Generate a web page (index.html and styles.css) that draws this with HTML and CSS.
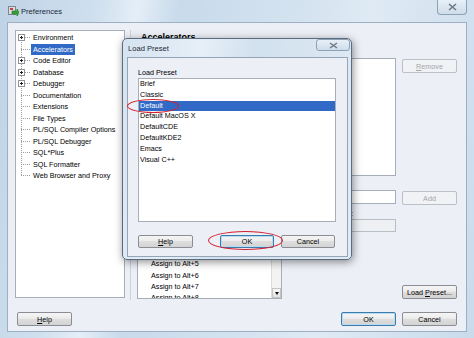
FILE: index.html
```html
<!DOCTYPE html>
<html lang="en">
<head>
    <meta charset="UTF-8">
    <title>Preferences</title>
    <link rel="stylesheet" href="styles.css">
</head>
<body>
    <div class="window">
        <div class="titlebar">
            <svg class="app-icon" width="11" height="12" viewBox="0 0 11 12">
                <rect x="0.5" y="1.5" width="7" height="8" fill="#d9dde2" stroke="#7d8792"/>
                <rect x="2" y="3" width="3" height="2" fill="#c9413f"/>
                <path d="M4 6 L9 6 L9 4 L11 7.5 L9 11 L9 9 L4 9 Z" fill="#3aa43a" stroke="#1f6e22" stroke-width="0.6"/>
            </svg>
            <span class="title">Preferences</span>
            <div class="close">
                <svg width="9" height="8" viewBox="0 0 9 8"><path d="M1 1 L8 7 M8 1 L1 7" stroke="#6c7a88" stroke-width="1.6"/></svg>
            </div>
        </div>

        <div class="client">
            <div class="main">
                <div class="tree">
                    <ul class="tree-items">
                        <li><span class="twig"><span class="exp"></span></span><span class="label">Environment</span></li>
                        <li><span class="twig"></span><span class="label selected">Accelerators</span></li>
                        <li><span class="twig"><span class="exp"></span></span><span class="label">Code Editor</span></li>
                        <li><span class="twig"><span class="exp"></span></span><span class="label">Database</span></li>
                        <li><span class="twig"><span class="exp"></span></span><span class="label">Debugger</span></li>
                        <li><span class="twig"></span><span class="label">Documentation</span></li>
                        <li><span class="twig"></span><span class="label">Extensions</span></li>
                        <li><span class="twig"></span><span class="label">File Types</span></li>
                        <li><span class="twig"></span><span class="label">PL/SQL Compiler Options</span></li>
                        <li><span class="twig"></span><span class="label">PL/SQL Debugger</span></li>
                        <li><span class="twig"></span><span class="label">SQL*Plus</span></li>
                        <li><span class="twig"></span><span class="label">SQL Formatter</span></li>
                        <li><span class="twig"></span><span class="label">Web Browser and Proxy</span></li>
                    </ul>
                </div>

                <section class="pane">
                    <h2 class="pane-title">Accelerators</h2>
                    <div class="row row-list">
                        <div class="box list-main"></div>
                        <button class="btn btn-side" disabled><u>R</u>emove</button>
                    </div>
                    <div class="row row-key">
                        <div class="field"></div>
                        <button class="btn btn-side" disabled>Add</button>
                    </div>
                    <div class="assigned">Currently assigned to component:</div>
                    <div class="field field-off"></div>
                    <div class="row row-bottom">
                        <div class="box list-keys">
                            <ul class="key-items">
                                <li>Assign to Alt+5</li>
                                <li>Assign to Alt+6</li>
                                <li>Assign to Alt+7</li>
                                <li>Assign to Alt+8</li>
                            </ul>
                            <div class="scrollbar"><span class="arrow-down"></span></div>
                        </div>
                        <button class="btn btn-preset">Load <u>P</u>reset...</button>
                    </div>
                </section>
            </div>

            <div class="footer">
                <button class="btn"><u>H</u>elp</button>
                <button class="btn btn-default push">OK</button>
                <button class="btn">Cancel</button>
            </div>
        </div>

        <!-- Load Preset dialog on top of the preferences window -->
        <div class="dialog">
            <div class="dialog-bar">
                <span class="title">Load Preset</span>
                <div class="close close-small">
                    <svg width="9" height="7" viewBox="0 0 9 7"><path d="M1 1 L8 6 M8 1 L1 6" stroke="#6c7a88" stroke-width="1.5"/></svg>
                </div>
            </div>
            <div class="dialog-body">
                <div class="dialog-label">Load Preset</div>
                <ul class="box preset-list">
                    <li>Brief</li>
                    <li>Classic</li>
                    <li class="selected">Default</li>
                    <li>Default MacOS X</li>
                    <li>DefaultCDE</li>
                    <li>DefaultKDE2</li>
                    <li>Emacs</li>
                    <li>Visual C++</li>
                </ul>
                <div class="dialog-buttons">
                    <button class="btn"><u>H</u>elp</button>
                    <button class="btn btn-default push">OK</button>
                    <button class="btn">Cancel</button>
                </div>
            </div>
        </div>

        <div class="mark mark-default"></div>
        <div class="mark mark-ok"></div>
    </div>
</body>
</html>
```

FILE: styles.css
```css
* {
    box-sizing: border-box;
}
body {
    margin: 0;
    font-family: "Liberation Sans", Arial, sans-serif;
    font-size: 7.2px;
    color: #000;
    background: #c4d7e8;
}
ul {
    list-style: none;
    margin: 0;
    padding: 0;
}
.window {
    position: relative;
    width: 474px;
    height: 338px;
    overflow: hidden;
    background: linear-gradient(100deg, #bfd3e6 0%, #cfdfee 18%, #e4eef7 26%, #c8daeb 34%, #d3e2ef 55%, #dfeaf4 70%, #c9dbeb 100%);
}
.titlebar {
    height: 22px;
    display: flex;
    align-items: center;
    padding-left: 8px;
}
.app-icon {
    margin-right: 2px;
}
.title {
    font-size: 7.6px;
    color: #1b2838;
}
.close {
    margin-left: auto;
    align-self: flex-start;
    width: 30px;
    height: 15px;
    margin-right: 7px;
    border: 1px solid #8ea2b5;
    border-top: none;
    border-radius: 0 0 4px 4px;
    background: linear-gradient(#e8f0f7, #cfdcea);
    display: flex;
    align-items: center;
    justify-content: center;
}
.client {
    margin-left: 7px;
    width: 460px;
    height: 310px;
    background: #eceff6;
    border: 1px solid #9cb0c3;
    padding: 7px 9px 0 7px;
    display: flex;
    flex-direction: column;
}
.main {
    display: flex;
    gap: 5px;
    height: 270px;
}
.box {
    background: #fff;
    border: 1px solid #a7aeb8;
}

/* tree */
.tree {
    width: 117px;
    height: 268px;
    background: #fff;
    border: 1px solid #a7aeb8;
}
.tree-items {
    padding: 1px 0 0 1px;
    background: repeating-linear-gradient(to bottom, #9d9d9d 0 1px, transparent 1px 2px) no-repeat 5px 7px / 1px 138px;
}
.tree-items li {
    display: flex;
    align-items: center;
    height: 11.5px;
}
.twig {
    width: 14px;
    height: 11px;
    display: flex;
    align-items: center;
    background: repeating-linear-gradient(90deg, #9d9d9d 0 1px, transparent 1px 2px) no-repeat 4px 5px / 10px 1px;
}
.exp {
    width: 7px;
    height: 7px;
    margin-left: 1px;
    border: 1px solid #8f9296;
    background:
        linear-gradient(#222, #222) no-repeat center / 3px 1px,
        linear-gradient(#222, #222) no-repeat center / 1px 3px,
        #fff;
}
.label {
    padding: 0 2px;
    line-height: 11px;
    white-space: nowrap;
}
.selected {
    background: #3169c6;
    color: #fff;
}

/* right pane */
.pane {
    flex: 1;
    border-left: 1px solid #cdd2da;
    padding-left: 6px;
    display: flex;
    flex-direction: column;
}
.pane-title {
    margin: 0 0 0 4px;
    font-size: 9px;
    line-height: 14px;
    font-weight: bold;
}
.row {
    display: flex;
    gap: 6px;
}
.row-list {
    margin-top: 14px;
}
.list-main {
    width: 259px;
    height: 118px;
}
.btn-side {
    width: 47px;
    margin-top: 1px;
}
.row-key {
    margin-top: 14px;
}
.field {
    width: 259px;
    height: 14px;
    background: #fff;
    border: 1px solid #a7aeb8;
}
.assigned {
    margin-top: 3px;
    width: 216px;
    line-height: 11px;
    text-align: right;
}
.field-off {
    height: 13px;
    background: #eef0f4;
    border-color: #b8bec6;
}
.row-bottom {
    margin-top: 3px;
    justify-content: space-between;
}
.list-keys {
    width: 145px;
    height: 64px;
    display: flex;
    overflow: hidden;
}
.key-items {
    flex: 1;
    padding: 22.4px 0 0 13px;
}
.key-items li {
    line-height: 11.3px;
    white-space: nowrap;
}
.scrollbar {
    width: 10px;
    background: #f3f3f3;
    border-left: 1px solid #dcdcdc;
    display: flex;
    align-items: flex-end;
}
.arrow-down {
    width: 9px;
    height: 10px;
    background: linear-gradient(#f7f7f7, #e2e2e2);
    border: 1px solid #c4c4c4;
    display: flex;
    align-items: center;
    justify-content: center;
}
.arrow-down::before {
    content: "";
    border-left: 2.5px solid transparent;
    border-right: 2.5px solid transparent;
    border-top: 3px solid #111;
}
.btn-preset {
    width: 68px;
    align-self: flex-end;
}

/* buttons */
.btn {
    width: 55px;
    height: 14px;
    padding: 0;
    font: inherit;
    color: #000;
    border: 1px solid #8a8e94;
    border-radius: 2px;
    background: linear-gradient(#f5f5f5 0%, #ececec 45%, #dedede 50%, #d3d3d3 100%);
}
.btn:disabled {
    color: #a3a6aa;
    border-color: #bcc0c6;
    background: #f1f2f5;
}
.btn-default {
    border-color: #3d7bad;
    box-shadow: inset 0 0 0 1px #b6dcf2;
}
.push {
    margin-left: auto;
}
.footer {
    display: flex;
    gap: 6px;
    margin-top: 12px;
    padding-left: 2px;
}

/* dialog */
.dialog {
    position: absolute;
    left: 122px;
    top: 38px;
    width: 230px;
    height: 222px;
    border: 1px solid #5b6c7e;
    border-radius: 5px;
    padding: 0 3px 2px 4px;
    background: linear-gradient(100deg, #d5e3f0 0%, #e6eff7 30%, #d2e1ee 50%, #e1ebf5 100%);
    box-shadow: 1px 2px 8px rgba(0, 0, 0, 0.45);
    display: flex;
    flex-direction: column;
}
.dialog-bar {
    height: 18px;
    margin-right: -3px;
    padding-left: 1px;
    display: flex;
    align-items: center;
}
.close-small {
    width: 34px;
    height: 12px;
    margin-right: 1px;
    border-top: 1px solid #8ea2b5;
    border-radius: 3px;
}
.dialog-body {
    flex: 1;
    background: #eceff6;
    border: 1px solid #93a5b7;
    padding: 10px 12px 0 10px;
}
.dialog-label {
    line-height: 10px;
}
.preset-list {
    width: 198px;
    height: 144px;
}
.preset-list li {
    line-height: 10.8px;
    padding-left: 1px;
    white-space: nowrap;
}
.dialog-buttons {
    display: flex;
    gap: 7px;
    margin-top: 13px;
}
.dialog-buttons .btn {
    height: 13px;
}
.dialog-buttons .push {
    width: 54px;
}
.dialog-buttons .push + .btn {
    width: 54px;
}

/* red annotation rings */
.mark {
    position: absolute;
    border: 1.6px solid #d3212d;
    border-radius: 50%;
}
.mark-default {
    left: 127px;
    top: 99px;
    width: 52px;
    height: 14px;
}
.mark-ok {
    left: 208px;
    top: 231px;
    width: 75px;
    height: 19px;
}
```
